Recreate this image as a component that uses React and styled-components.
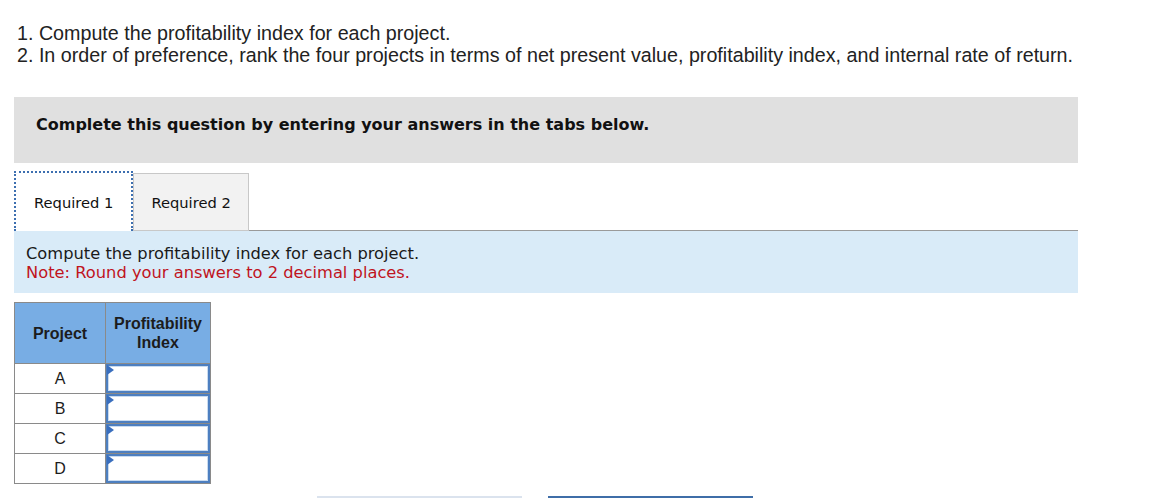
import React, { useState } from "react";
import styled, { createGlobalStyle, css } from "styled-components";

const GlobalStyle = createGlobalStyle`
  body {
    margin: 0;
    background: #fff;
  }
`;

const Page = styled.div`
  width: 1064px;
  padding: 22px 0 0 14px;
`;

const Intro = styled.div`
  font-family: "Liberation Sans", Arial, sans-serif;
  font-size: 19.7px;
  line-height: 22px;
  color: #222;
  padding-left: 3px;
`;

const Banner = styled.div`
  margin-top: 31px;
  height: 66px;
  box-sizing: border-box;
  padding: 0 0 11px 22px;
  background: #e0e0e0;
  display: flex;
  align-items: center;
  font-family: "DejaVu Sans", Verdana, sans-serif;
  font-weight: bold;
  font-size: 16px;
  color: #111;
`;

const TabBar = styled.div`
  display: flex;
  align-items: flex-end;
  margin-top: 8px;
  border-bottom: 1px solid #9a9a9a;
`;

const Tab = styled.button`
  font-family: "DejaVu Sans", Verdana, sans-serif;
  font-size: 14.7px;
  color: #111;
  height: 58px;
  padding: 0 17px;
  margin-bottom: -1px;
  border: 1px solid #c8c8c8;
  background: #f2f2f2;
  cursor: pointer;
  ${({ active }) =>
    active &&
    css`
      height: 60px;
      padding: 0 18px;
      background: #fff;
      border: 2px dotted #3d6fb0;
      border-bottom: none;
    `}
`;

const Instructions = styled.div`
  background: #d9ebf8;
  height: 62px;
  padding: 13px 12px 0;
  box-sizing: border-box;
  font-family: "DejaVu Sans", Verdana, sans-serif;
  font-size: 16.3px;
  line-height: 19px;
  color: #1a1a1a;
`;

const Note = styled.div`
  color: #c0141e;
`;

const Table = styled.table`
  margin-top: 9px;
  border-collapse: collapse;
  font-family: "Liberation Sans", Arial, sans-serif;
`;

const HeadCell = styled.th`
  background: #78ade4;
  border: 1px solid #8a8a8a;
  height: 60px;
  width: ${({ w }) => w}px;
  font-size: 16px;
  line-height: 19px;
  font-weight: bold;
  color: #1c1c1c;
  padding: 0;
  text-align: center;
`;

const LabelCell = styled.td`
  border: 1px solid #8a8a8a;
  height: 29px;
  text-align: center;
  font-size: 16px;
  color: #1c1c1c;
  padding: 0;
`;

const InputCell = styled.td`
  border: 1px solid #8a8a8a;
  padding: 0;
  height: 29px;
`;

const InputWrap = styled.div`
  position: relative;
  height: 29px;
`;

const Marker = styled.span`
  position: absolute;
  left: 1px;
  top: 1px;
  width: 0;
  height: 0;
  border-top: 5px solid transparent;
  border-bottom: 5px solid transparent;
  border-left: 7px solid #3a6fbe;
`;

const AnswerInput = styled.input`
  display: block;
  width: 100%;
  height: 29px;
  box-sizing: border-box;
  border: 2px solid #4d7fc0;
  box-shadow: inset 0 0 0 1px #c9dbf0;
  outline: none;
  font-family: "Liberation Sans", Arial, sans-serif;
  font-size: 14px;
  padding: 0 6px;
`;

const NavRow = styled.div`
  display: flex;
  gap: 26px;
  margin: 12px 0 0 303px;
`;

const NavButton = styled.button`
  width: 205px;
  height: 40px;
  border: none;
  border-top: 2px solid ${({ primary }) => (primary ? "#3f6ea8" : "#dbe3ee")};
  background: ${({ primary }) => (primary ? "#3f6ea8" : "#fff")};
`;

const projects = ["A", "B", "C", "D"];

const App = () => {
  const [activeTab, setActiveTab] = useState(1);
  const [answers, setAnswers] = useState({ A: "", B: "", C: "", D: "" });

  const handleChange = (event) => {
    const { name, value } = event.target;
    setAnswers((prev) => ({ ...prev, [name]: value }));
  };

  return (
    <Page>
      <GlobalStyle />
      <Intro>
        <div>1. Compute the profitability index for each project.</div>
        <div>
          2. In order of preference, rank the four projects in terms of net present value,
          profitability index, and internal rate of return.
        </div>
      </Intro>
      <Banner>Complete this question by entering your answers in the tabs below.</Banner>
      <TabBar>
        <Tab active={activeTab === 1} onClick={() => setActiveTab(1)}>
          Required 1
        </Tab>
        <Tab active={activeTab === 2} onClick={() => setActiveTab(2)}>
          Required 2
        </Tab>
      </TabBar>
      <Instructions>
        <div>Compute the profitability index for each project.</div>
        <Note>Note: Round your answers to 2 decimal places.</Note>
      </Instructions>
      <Table>
        <thead>
          <tr>
            <HeadCell w={90}>Project</HeadCell>
            <HeadCell w={104}>
              Profitability
              <br />
              Index
            </HeadCell>
          </tr>
        </thead>
        <tbody>
          {projects.map((p) => (
            <tr key={p}>
              <LabelCell>{p}</LabelCell>
              <InputCell>
                <InputWrap>
                  <AnswerInput name={p} value={answers[p]} onChange={handleChange} />
                  <Marker />
                </InputWrap>
              </InputCell>
            </tr>
          ))}
        </tbody>
      </Table>
      <NavRow>
        <NavButton />
        <NavButton primary />
      </NavRow>
    </Page>
  );
};

export default App;
